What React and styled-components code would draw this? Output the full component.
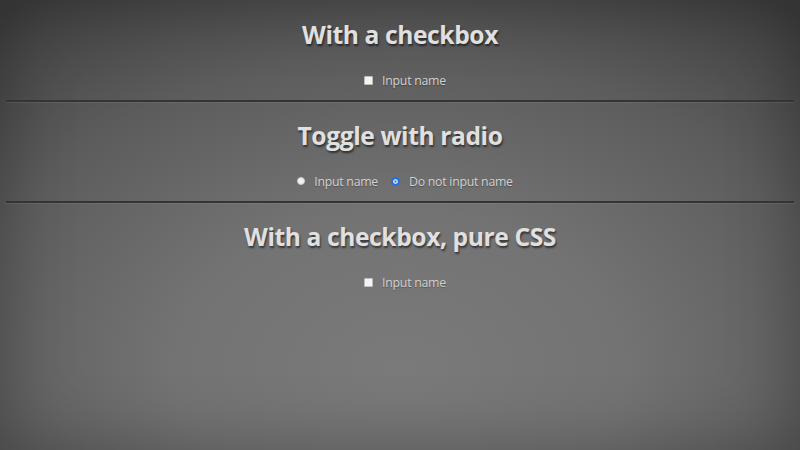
import React from "react";
import styled, { createGlobalStyle } from "styled-components";

const Global = createGlobalStyle`
  html, body { margin: 0; padding: 0; height: 100%; }
  body {
    background: radial-gradient(ellipse 80% 100% at 50% 82%, #7a7a7a 0%, #737373 35%, #5c5c5c 70%, #404040 100%);
    background-color: #3c3c3c;
    font-family: "Open Sans", "Noto Sans", sans-serif;
    color: #d6d6d6;
  }
  #root { min-height: 450px; }
`;

const Page = styled.main`
  height: 450px;
  padding: 0 6px;
  box-sizing: border-box;
  display: flex;
  flex-direction: column;
  box-shadow: inset 0 0 70px rgba(0, 0, 0, 0.28);
`;

const Section = styled.section`
  display: flex;
  flex-direction: column;
  align-items: center;
  padding-top: ${(p) => p.$top}px;
`;

const Heading = styled.h2`
  margin: 0;
  font-family: "Open Sans", sans-serif;
  font-weight: 700;
  font-size: 24.6px;
  line-height: 30px;
  letter-spacing: -0.4px;
  color: #e0e0e0;
  text-shadow: 1px 2px 2px rgba(0, 0, 0, 0.55);
`;

const Row = styled.div`
  display: flex;
  align-items: center;
  gap: 13px;
  margin-top: 22px;
  padding-left: 10px;
  height: 16px;
`;

const Option = styled.label`
  display: flex;
  align-items: center;
  gap: 9px;
  font-size: 12.3px;
  letter-spacing: -0.25px;
  color: #d2d2d2;
  text-shadow: 0 1px 1px rgba(0, 0, 0, 0.3);
`;

const Box = styled.span`
  width: 7px;
  height: 7px;
  background: #f4f4f4;
  border: 1px solid #bdbdbd;
  border-radius: 1px;
  box-sizing: content-box;
`;

const Radio = styled.span`
  width: ${(p) => (p.$checked ? 9 : 8)}px;
  height: ${(p) => (p.$checked ? 9 : 8)}px;
  border-radius: 50%;
  box-sizing: border-box;
  background: ${(p) => (p.$checked ? "#2a78e0" : "#f2f2f2")};
  border: ${(p) => (p.$checked ? "2px solid #2a6fd6" : "1px solid #c8c8c8")};
  box-shadow: ${(p) => (p.$checked ? "inset 0 0 0 1.5px #cfe0f7" : "none")};
`;

const Rule = styled.hr`
  width: 100%;
  margin: ${(p) => p.$mt}px 0 0;
  border: 0;
  height: 0;
  border-top: 2px solid #343434;
  border-bottom: 1px solid rgba(255, 255, 255, 0.08);
`;

export default function App() {
  return (
    <>
      <Global />
      <Page>
        <Section $top={20}>
          <Heading>With a checkbox</Heading>
          <Row>
            <Option>
              <Box />
              Input name
            </Option>
          </Row>
        </Section>
        <Rule $mt={12} />
        <Section $top={18}>
          <Heading>Toggle with radio</Heading>
          <Row>
            <Option>
              <Radio />
              Input name
            </Option>
            <Option>
              <Radio $checked />
              Do not input name
            </Option>
          </Row>
        </Section>
        <Rule $mt={12} />
        <Section $top={18}>
          <Heading>With a checkbox, pure CSS</Heading>
          <Row>
            <Option>
              <Box />
              Input name
            </Option>
          </Row>
        </Section>
      </Page>
    </>
  );
}
